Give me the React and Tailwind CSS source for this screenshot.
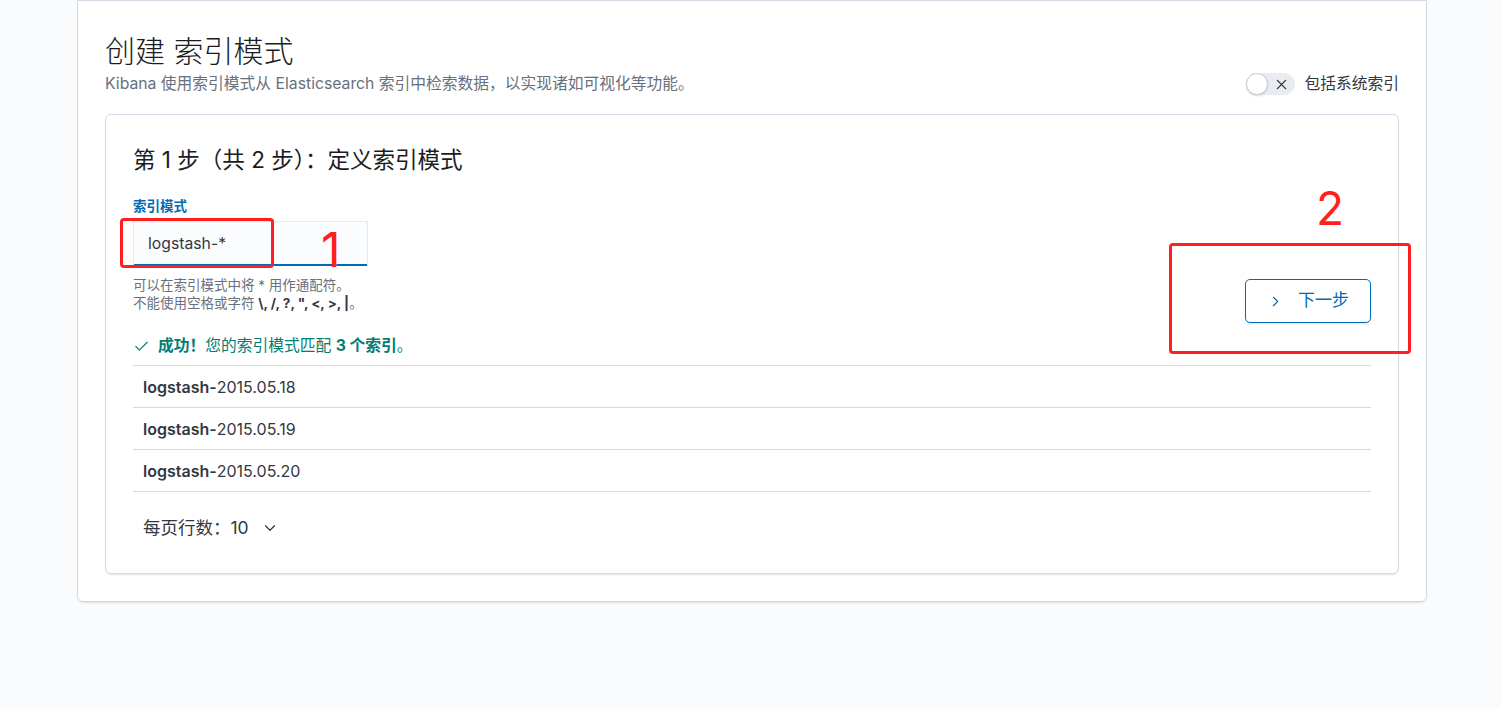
import { Check, ChevronDown, ChevronRight, X } from "lucide-react"

const rows = ["2015.05.18", "2015.05.19", "2015.05.20"]

export default function App() {
  return (
    <div className="relative min-h-[709px] w-full bg-[#fafbfd] font-['Inter','Noto_Sans_CJK_SC',sans-serif] text-[#343741]">
      <div className="ml-[77px] w-[1350px] pb-7">
        <div className="rounded-b-md border border-[#d3dae6] bg-white px-[27px] pb-[27px] pt-8 shadow-[0_2px_2px_-1px_rgba(152,162,179,0.3)]">
          {/* Header */}
          <div className="flex items-end justify-between">
            <div>
              <h1 className="text-[30px] font-light leading-9 text-[#1a1c21]">创建 索引模式</h1>
              <p className="mt-1 text-[15.75px] leading-[22px] text-[#69707d]">
                Kibana 使用索引模式从 Elasticsearch 索引中检索数据，以实现诸如可视化等功能。
              </p>
            </div>
            <div className="flex items-center gap-2.5">
              <div className="relative h-[22px] w-[49px] rounded-full bg-[#e9ecf1]">
                <div className="absolute left-0 top-0 h-[22px] w-[22px] rounded-full border border-[#c9d0db] bg-white shadow-[0_1px_2px_rgba(0,0,0,0.15)]" />
                <X size={17} strokeWidth={1.5} className="absolute right-[5px] top-[2.5px] text-[#343741]" />
              </div>
              <span className="text-[15.75px] leading-[22px]">包括系统索引</span>
            </div>
          </div>

          {/* Step panel */}
          <div className="mt-[19px] rounded-md border border-[#d3dae6] bg-white px-[27px] pb-[33px] pt-[31px] shadow-[0_2px_2px_-1px_rgba(152,162,179,0.3)]">
            <h2 className="text-[22.5px] font-normal leading-7 text-[#1a1c21]">第 1 步（共 2 步）：定义索引模式</h2>

            <div className="flex items-start justify-between">
              <div>
                <label className="mt-6 block text-[13.5px] font-bold leading-4 text-[#006bb4]">索引模式</label>
                <div className="mt-[7px] flex h-[45px] w-[235px] items-center border border-b-0 border-[#e4e8ef] bg-[#fbfcfd] px-3.5 shadow-[inset_0_-2px_0_#006bb4]">
                  <span className="text-[15.75px]">logstash-*</span>
                </div>
                <div className="mt-[10px] text-[13.5px] leading-[18px] text-[#69707d]">
                  <p>可以在索引模式中将 * 用作通配符。</p>
                  <p>
                    不能使用空格或字符 <span className="font-bold text-[#343741]">\, /, ?, ", &lt;, &gt;, |</span>。
                  </p>
                </div>
              </div>
              <button className="mb-[-12px] mt-[105px] flex h-[44px] w-[126px] items-center justify-center gap-3.5 rounded-[5px] border border-[#006bb4] bg-white text-[17px] text-[#006bb4] shadow-[0_2px_2px_-1px_rgba(152,162,179,0.3)]">
                <ChevronRight size={17} strokeWidth={1.6} />
                <span>下一步</span>
              </button>
            </div>

            <div className="mt-6 flex items-center gap-2 text-[15.75px] leading-5 text-[#017d73]">
              <Check size={17} strokeWidth={1.6} />
              <span>
                <span className="font-bold">成功！</span>您的索引模式匹配 <span className="font-bold">3 个索引</span>。
              </span>
            </div>

            <div className="mt-[9px] border-t border-[#d3dae6]">
              {rows.map((r) => (
                <div key={r} className="flex h-[42px] items-center border-b border-[#d3dae6] px-2.5 text-[16px]">
                  <span className="font-semibold">logstash-</span>
                  <span>{r}</span>
                </div>
              ))}
            </div>

            <div className="mt-6 flex items-center gap-3 px-2.5 text-[17.5px] leading-6">
              <span>每页行数：10</span>
              <ChevronDown size={18} strokeWidth={1.6} />
            </div>
          </div>
        </div>
      </div>

      {/* Red annotations */}
      <div className="absolute left-[120px] top-[218px] h-[50px] w-[154px] rounded-[4px] border-[3px] border-[#ff1f1f]" />
      <div className="absolute left-[321px] top-[222px] text-[48px] leading-[56px] text-[#ff1f1f]">1</div>
      <div className="absolute left-[1169px] top-[243px] h-[111px] w-[242px] rounded-[4px] border-[3px] border-[#ff1f1f]" />
      <div className="absolute left-[1316px] top-[180px] text-[46px] leading-[56px] text-[#ff1f1f]">2</div>
    </div>
  )
}
